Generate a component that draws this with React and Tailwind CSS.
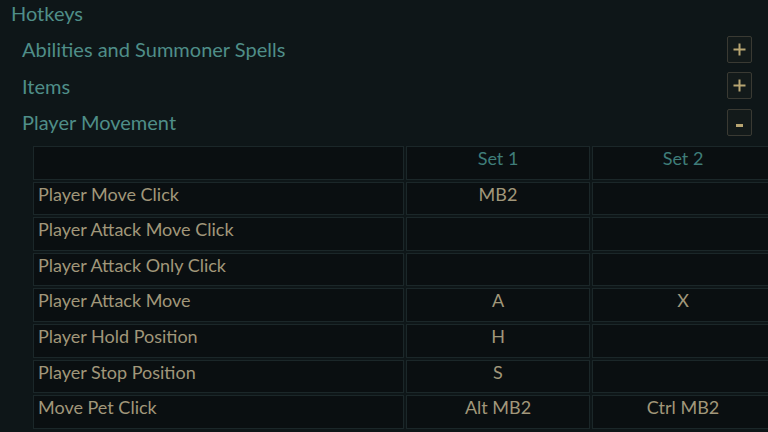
import React from 'react';

const rows = [
  { name: 'Player Move Click', set1: 'MB2', set2: '' },
  { name: 'Player Attack Move Click', set1: '', set2: '' },
  { name: 'Player Attack Only Click', set1: '', set2: '' },
  { name: 'Player Attack Move', set1: 'A', set2: 'X' },
  { name: 'Player Hold Position', set1: 'H', set2: '' },
  { name: 'Player Stop Position', set1: 'S', set2: '' },
  { name: 'Move Pet Click', set1: 'Alt MB2', set2: 'Ctrl MB2' },
];

const sections = [
  { label: 'Abilities and Summoner Spells', open: false },
  { label: 'Items', open: false },
  { label: 'Player Movement', open: true },
];

function ToggleButton({ open }) {
  return (
    <button className="w-[25px] h-[27px] flex items-center justify-center bg-[#131a1a] border border-[#3a3a33] rounded-[2px] text-[#b8a572]">
      {open ? (
        <span className="block w-[7px] h-[3px] mt-[6px] bg-[#b8a572]" />
      ) : (
        <svg width="15" height="15" viewBox="0 0 15 15">
          <path d="M7.5 1.5v12M1.5 7.5h12" stroke="currentColor" strokeWidth="2" />
        </svg>
      )}
    </button>
  );
}

function Cell({ children, className = '' }) {
  return (
    <div className={`h-[33.6px] bg-[#0a0f11] border border-[#1b2729] leading-[22px] text-[18px] ${className}`}>
      {children}
    </div>
  );
}

export default function App() {
  return (
    <div className="w-[768px] h-[432px] overflow-hidden bg-[#0e1618] font-['Lato','Open_Sans',sans-serif]">
      <div className="pl-[11px] h-[31px] leading-[26px] text-[20px] text-[#4f8e88]">Hotkeys</div>
      <div className="flex flex-col">
        {sections.map(s => (
          <div key={s.label} className="flex items-center justify-between pl-[22px] pr-[16px] h-[36.5px]">
            <span className="text-[20px] text-[#4f8e88]">{s.label}</span>
            <ToggleButton open={s.open} />
          </div>
        ))}
      </div>
      <div className="ml-[33px] w-[741px] mt-[5.5px] grid grid-cols-[371px_184px_182px] gap-[2px]">
        <Cell />
        <Cell className="text-center text-[#3f7d79]">Set 1</Cell>
        <Cell className="text-center text-[#3f7d79]">Set 2</Cell>
        {rows.map(r => (
          <React.Fragment key={r.name}>
            <Cell className="pl-[4px] text-[#a1977a]">{r.name}</Cell>
            <Cell className="text-center text-[#a1977a]">{r.set1}</Cell>
            <Cell className="text-center text-[#a1977a]">{r.set2}</Cell>
          </React.Fragment>
        ))}
      </div>
    </div>
  );
}
